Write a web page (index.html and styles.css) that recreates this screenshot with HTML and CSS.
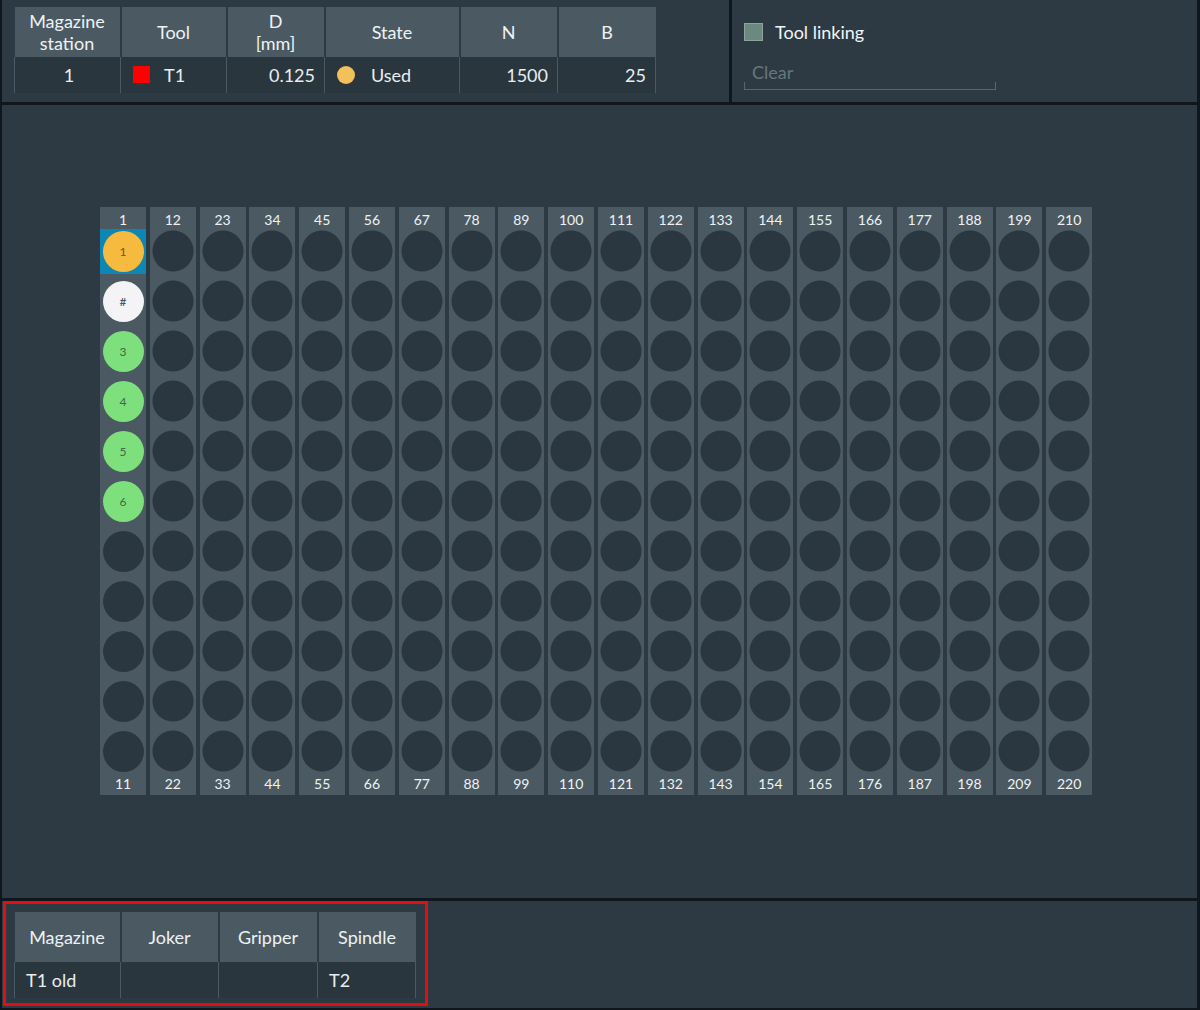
FILE: index.html
```html
<!DOCTYPE html>
<html>
<head>
<meta charset="utf-8">
<link rel="stylesheet" href="styles.css">
</head>
<body>
<div class="app">
  <div class="top">
    <section class="panel station-panel">
      <table class="grid-table station-table">
        <thead>
          <tr>
            <th class="w1">Magazine<br>station</th>
            <th class="w2">Tool</th>
            <th class="w3">D<br>[mm]</th>
            <th class="w4">State</th>
            <th class="w5">N</th>
            <th class="w6">B</th>
          </tr>
        </thead>
        <tbody>
          <tr>
            <td class="center">1</td>
            <td><span class="tool-cell"><span class="swatch"></span>T1</span></td>
            <td class="right">0.125</td>
            <td><span class="state-cell"><span class="dot"></span>Used</span></td>
            <td class="right">1500</td>
            <td class="right">25</td>
          </tr>
        </tbody>
      </table>
    </section>
    <section class="panel link-panel">
      <label class="check-row"><span class="checkbox"></span><span>Tool linking</span></label>
      <div class="clear-field">
        <div class="placeholder">Clear</div>
        <div class="field-line"></div>
      </div>
    </section>
  </div>

  <section class="panel magazine-panel">
    <div class="magazine">
      <div class="col">
        <div class="lbl top-lbl">1</div>
        <div class="slots">
          <div class="slot active"><span class="pocket yellow">1</span></div>
          <div class="slot"><span class="pocket white">#</span></div>
          <div class="slot"><span class="pocket green">3</span></div>
          <div class="slot"><span class="pocket green">4</span></div>
          <div class="slot"><span class="pocket green">5</span></div>
          <div class="slot"><span class="pocket green">6</span></div>
          <div class="slot"><span class="pocket"></span></div>
          <div class="slot"><span class="pocket"></span></div>
          <div class="slot"><span class="pocket"></span></div>
          <div class="slot"><span class="pocket"></span></div>
          <div class="slot"><span class="pocket"></span></div>
        </div>
        <div class="lbl bot-lbl">11</div>
      </div>
      <div class="col"><div class="lbl top-lbl">12</div><div class="slots empty"></div><div class="lbl bot-lbl">22</div></div>
      <div class="col"><div class="lbl top-lbl">23</div><div class="slots empty"></div><div class="lbl bot-lbl">33</div></div>
      <div class="col"><div class="lbl top-lbl">34</div><div class="slots empty"></div><div class="lbl bot-lbl">44</div></div>
      <div class="col"><div class="lbl top-lbl">45</div><div class="slots empty"></div><div class="lbl bot-lbl">55</div></div>
      <div class="col"><div class="lbl top-lbl">56</div><div class="slots empty"></div><div class="lbl bot-lbl">66</div></div>
      <div class="col"><div class="lbl top-lbl">67</div><div class="slots empty"></div><div class="lbl bot-lbl">77</div></div>
      <div class="col"><div class="lbl top-lbl">78</div><div class="slots empty"></div><div class="lbl bot-lbl">88</div></div>
      <div class="col"><div class="lbl top-lbl">89</div><div class="slots empty"></div><div class="lbl bot-lbl">99</div></div>
      <div class="col"><div class="lbl top-lbl">100</div><div class="slots empty"></div><div class="lbl bot-lbl">110</div></div>
      <div class="col"><div class="lbl top-lbl">111</div><div class="slots empty"></div><div class="lbl bot-lbl">121</div></div>
      <div class="col"><div class="lbl top-lbl">122</div><div class="slots empty"></div><div class="lbl bot-lbl">132</div></div>
      <div class="col"><div class="lbl top-lbl">133</div><div class="slots empty"></div><div class="lbl bot-lbl">143</div></div>
      <div class="col"><div class="lbl top-lbl">144</div><div class="slots empty"></div><div class="lbl bot-lbl">154</div></div>
      <div class="col"><div class="lbl top-lbl">155</div><div class="slots empty"></div><div class="lbl bot-lbl">165</div></div>
      <div class="col"><div class="lbl top-lbl">166</div><div class="slots empty"></div><div class="lbl bot-lbl">176</div></div>
      <div class="col"><div class="lbl top-lbl">177</div><div class="slots empty"></div><div class="lbl bot-lbl">187</div></div>
      <div class="col"><div class="lbl top-lbl">188</div><div class="slots empty"></div><div class="lbl bot-lbl">198</div></div>
      <div class="col"><div class="lbl top-lbl">199</div><div class="slots empty"></div><div class="lbl bot-lbl">209</div></div>
      <div class="col"><div class="lbl top-lbl">210</div><div class="slots empty"></div><div class="lbl bot-lbl">220</div></div>
    </div>
  </section>

  <section class="panel bottom-panel">
    <div class="highlight-box">
      <table class="grid-table transfer-table">
        <thead>
          <tr>
            <th class="b1">Magazine</th>
            <th class="b2">Joker</th>
            <th class="b3">Gripper</th>
            <th class="b4">Spindle</th>
          </tr>
        </thead>
        <tbody>
          <tr>
            <td>T1 old</td>
            <td></td>
            <td></td>
            <td>T2</td>
          </tr>
        </tbody>
      </table>
    </div>
  </section>
</div>
</body>
</html>
```

FILE: styles.css
```css
html, body {
  margin: 0;
  padding: 0;
}
body {
  background: #10171c;
  font-family: Lato, "Open Sans", sans-serif;
  color: #e9edf0;
  width: 1200px;
  height: 1010px;
  overflow: hidden;
}
.app {
  box-sizing: border-box;
  width: 1200px;
  height: 1010px;
  padding: 0 3px 2px 2px;
  display: grid;
  grid-template-rows: 102px 793px 107px;
  row-gap: 3px;
}
.panel {
  background: #2e3a43;
  box-sizing: border-box;
}
.top {
  display: grid;
  grid-template-columns: 727px 1fr;
  column-gap: 3px;
}

/* tables */
.grid-table {
  border-collapse: collapse;
  table-layout: fixed;
  font-size: 18px;
}
.grid-table th {
  background: #4b5a62;
  font-weight: normal;
  color: #eef2f4;
  line-height: 22px;
  height: 50px;
  padding: 0;
  text-align: center;
  border-left: 2px solid #2e3a43;
  box-sizing: border-box;
}
.grid-table th:first-child { border-left: none; }
.grid-table td {
  background: #2a363e;
  border-left: 1px solid #4b5a62;
  padding: 0 11px;
  white-space: nowrap;
}
.grid-table td:last-child { border-right: 1px solid #4b5a62; }

.station-panel {
  padding: 7px 0 0 12px;
}
.station-table td {
  height: 35px;
  padding: 0 10px 1px 12px;
}
.station-table td.right { padding-right: 9px; }
.station-table td.center { padding-left: 13px; }
.w1 { width: 106px; }
.w2 { width: 106px; }
.w3 { width: 98px; }
.w4 { width: 135px; }
.w5 { width: 98px; }
.w6 { width: 98px; }
.center { text-align: center; }
.right { text-align: right; }
.tool-cell, .state-cell {
  display: flex;
  align-items: center;
}
.swatch {
  width: 17px;
  height: 17px;
  background: #ff0000;
  margin: 0 14px 0 0;
}
.dot {
  width: 18px;
  height: 18px;
  border-radius: 50%;
  background: #f4c05a;
  margin: 0 16px 0 0;
}

.link-panel {
  padding: 21px 0 0 12px;
}
.check-row {
  display: flex;
  align-items: center;
  font-size: 18px;
  color: #f2f5f7;
}
.checkbox {
  box-sizing: border-box;
  width: 19px;
  height: 18px;
  border: 1px solid #8fa29d;
  background: #6a8a80;
  margin-right: 12px;
}
.clear-field {
  width: 252px;
  margin-top: 19px;
}
.placeholder {
  color: #66767e;
  font-size: 18px;
  padding-left: 8px;
  line-height: 20px;
}
.field-line {
  height: 7px;
  border: 1px solid #56666e;
  border-top: none;
}

/* magazine */
.magazine-panel {
  padding: 102px 0 0 98px;
}
.magazine {
  display: grid;
  grid-template-columns: repeat(20, 46px);
  column-gap: 3.8px;
}
.col {
  background: #4b5a62;
  display: flex;
  flex-direction: column;
  height: 588px;
}
.lbl {
  height: 19px;
  text-align: center;
  font-size: 14px;
  color: #eef2f4;
}
.top-lbl { line-height: 25px; }
.bot-lbl { line-height: 15px; }
.slots {
  height: 550px;
  display: flex;
  flex-direction: column;
}
.slots.empty {
  background: radial-gradient(circle at 23px 25px, #2b3740 20px, rgba(43,55,64,0) 21px) 0 0 / 46px 50px repeat-y;
}
.slot {
  height: 50px;
  display: flex;
  align-items: center;
  justify-content: center;
}
.slot.active {
  background: linear-gradient(#4b5a62 3px, #0d86b4 3px, #0d86b4 48px, #4b5a62 48px);
}
.pocket {
  width: 41px;
  height: 41px;
  border-radius: 50%;
  background: #2b3740;
  display: flex;
  align-items: center;
  justify-content: center;
  font-size: 12px;
  color: #4a4a4a;
}
.pocket.yellow { background: #f6ba3e; color: #6a5630; }
.pocket.white { background: #f4f4f6; color: #444; }
.pocket.green { background: #7ee07c; color: #3f6a42; }

/* bottom */
.bottom-panel {
  padding: 0;
}
.highlight-box {
  box-sizing: border-box;
  width: 425px;
  height: 105px;
  margin-left: 1px;
  border: 3px solid #e00f14;
  padding: 8px 0 0 8px;
}
.transfer-table td {
  height: 36px;
  padding: 0 11px;
}
.b1 { width: 106px; }
.b2 { width: 98px; }
.b3 { width: 99px; }
.b4 { width: 98px; }
```
